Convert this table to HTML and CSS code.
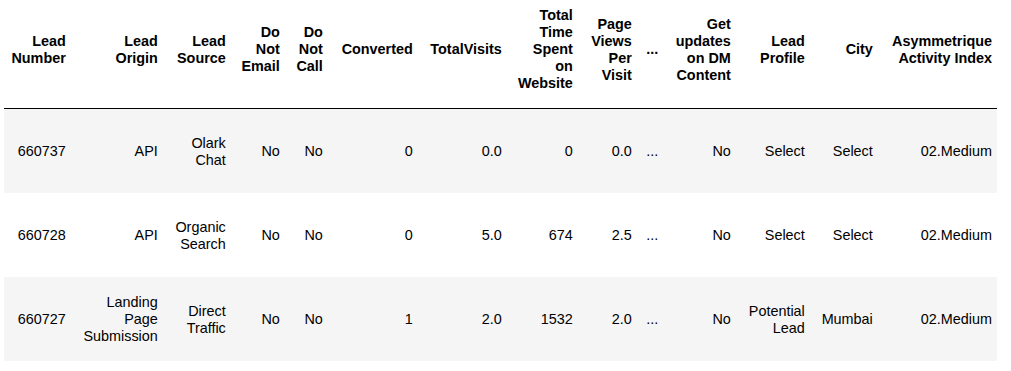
FILE: index.html
```html
<!DOCTYPE html>
<html lang="en">
<head>
<meta charset="utf-8">
<title>DataFrame</title>
<link rel="stylesheet" href="styles.css">
</head>
<body>
<table class="dataframe">
  <colgroup>
    <col class="c1"><col class="c2"><col class="c3"><col class="c4"><col class="c5"><col class="c6"><col class="c7">
    <col class="c8"><col class="c9"><col class="c10"><col class="c11"><col class="c12"><col class="c13"><col class="c14">
  </colgroup>
  <thead>
    <tr>
      <th>Lead Number</th>
      <th>Lead Origin</th>
      <th>Lead Source</th>
      <th>Do Not Email</th>
      <th>Do Not Call</th>
      <th>Converted</th>
      <th>TotalVisits</th>
      <th>Total Time Spent on Website</th>
      <th>Page Views Per Visit</th>
      <th>...</th>
      <th>Get updates on DM Content</th>
      <th>Lead Profile</th>
      <th>City</th>
      <th>Asymmetrique Activity Index</th>
    </tr>
  </thead>
  <tbody>
    <tr>
      <td>660737</td>
      <td>API</td>
      <td>Olark Chat</td>
      <td>No</td>
      <td>No</td>
      <td>0</td>
      <td>0.0</td>
      <td>0</td>
      <td>0.0</td>
      <td>...</td>
      <td>No</td>
      <td>Select</td>
      <td>Select</td>
      <td>02.Medium</td>
    </tr>
    <tr>
      <td>660728</td>
      <td>API</td>
      <td>Organic Search</td>
      <td>No</td>
      <td>No</td>
      <td>0</td>
      <td>5.0</td>
      <td>674</td>
      <td>2.5</td>
      <td>...</td>
      <td>No</td>
      <td>Select</td>
      <td>Select</td>
      <td>02.Medium</td>
    </tr>
    <tr>
      <td>660727</td>
      <td>Landing Page Submission</td>
      <td>Direct Traffic</td>
      <td>No</td>
      <td>No</td>
      <td>1</td>
      <td>2.0</td>
      <td>1532</td>
      <td>2.0</td>
      <td>...</td>
      <td>No</td>
      <td>Potential Lead</td>
      <td>Mumbai</td>
      <td>02.Medium</td>
    </tr>
  </tbody>
</table>
</body>
</html>
```
FILE: styles.css
```css
html, body {
  margin: 0;
  padding: 0;
  background: #ffffff;
}

body {
  font-family: "Liberation Sans", Arial, sans-serif;
  font-size: 14.4px;
  color: #000000;
}

.dataframe {
  table-layout: fixed;
  width: 993px;
  margin: 0 0 0 4px;
  border-collapse: collapse;
  border-spacing: 0;
}

.c1 { width: 69px; }
.c2 { width: 92px; }
.c3 { width: 68px; }
.c4 { width: 54px; }
.c5 { width: 43px; }
.c6 { width: 90px; }
.c7 { width: 89px; }
.c8 { width: 71px; }
.c9 { width: 59px; }
.c10 { width: 26px; }
.c11 { width: 73px; }
.c12 { width: 74px; }
.c13 { width: 68px; }
.c14 { width: 117px; }

.dataframe thead {
  border-bottom: 1px solid #000000;
}

.dataframe th {
  font-weight: bold;
  text-align: right;
  vertical-align: middle;
  padding: 7px 7.2px 16px;
  line-height: 17px;
}

.dataframe td {
  text-align: right;
  vertical-align: middle;
  padding: 2px 7.2px 0;
  height: 84px;
  box-sizing: border-box;
  line-height: 17px;
}

.dataframe th:last-child,
.dataframe td:last-child {
  padding-right: 5px;
}

.dataframe tbody tr:nth-child(odd) {
  background: #f5f5f5;
}
```
